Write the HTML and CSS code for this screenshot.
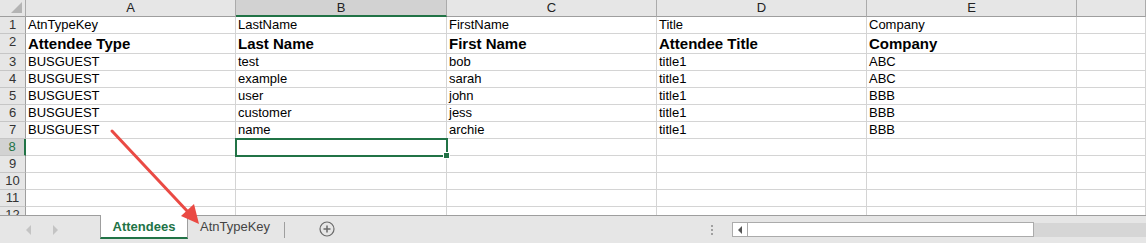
FILE: index.html
```html
<!DOCTYPE html>
<html lang="en">
<head>
    <meta charset="UTF-8">
    <title>Attendees - Excel</title>
    <link rel="stylesheet" href="styles.css">
</head>
<body>
    <div class="window">
        <!-- Worksheet grid -->
        <div class="sheet">
            <div class="corner"></div>
            <div class="col-head">A</div>
            <div class="col-head selected">B</div>
            <div class="col-head">C</div>
            <div class="col-head">D</div>
            <div class="col-head">E</div>
            <div class="col-head"></div>

            <div class="row-head">1</div>
            <div class="cell">AtnTypeKey</div>
            <div class="cell">LastName</div>
            <div class="cell">FirstName</div>
            <div class="cell">Title</div>
            <div class="cell">Company</div>
            <div class="cell"></div>

            <div class="row-head">2</div>
            <div class="cell bold">Attendee Type</div>
            <div class="cell bold">Last Name</div>
            <div class="cell bold">First Name</div>
            <div class="cell bold">Attendee Title</div>
            <div class="cell bold">Company</div>
            <div class="cell"></div>

            <div class="row-head">3</div>
            <div class="cell">BUSGUEST</div>
            <div class="cell">test</div>
            <div class="cell">bob</div>
            <div class="cell">title1</div>
            <div class="cell">ABC</div>
            <div class="cell"></div>

            <div class="row-head">4</div>
            <div class="cell">BUSGUEST</div>
            <div class="cell">example</div>
            <div class="cell">sarah</div>
            <div class="cell">title1</div>
            <div class="cell">ABC</div>
            <div class="cell"></div>

            <div class="row-head">5</div>
            <div class="cell">BUSGUEST</div>
            <div class="cell">user</div>
            <div class="cell">john</div>
            <div class="cell">title1</div>
            <div class="cell">BBB</div>
            <div class="cell"></div>

            <div class="row-head">6</div>
            <div class="cell">BUSGUEST</div>
            <div class="cell">customer</div>
            <div class="cell">jess</div>
            <div class="cell">title1</div>
            <div class="cell">BBB</div>
            <div class="cell"></div>

            <div class="row-head">7</div>
            <div class="cell">BUSGUEST</div>
            <div class="cell">name</div>
            <div class="cell">archie</div>
            <div class="cell">title1</div>
            <div class="cell">BBB</div>
            <div class="cell"></div>

            <div class="row-head selected">8</div>
            <div class="cell"></div>
            <div class="cell active"><span class="fill-handle"></span></div>
            <div class="cell"></div>
            <div class="cell"></div>
            <div class="cell"></div>
            <div class="cell"></div>

            <div class="row-head">9</div>
            <div class="cell"></div><div class="cell"></div><div class="cell"></div>
            <div class="cell"></div><div class="cell"></div><div class="cell"></div>

            <div class="row-head">10</div>
            <div class="cell"></div><div class="cell"></div><div class="cell"></div>
            <div class="cell"></div><div class="cell"></div><div class="cell"></div>

            <div class="row-head">11</div>
            <div class="cell"></div><div class="cell"></div><div class="cell"></div>
            <div class="cell"></div><div class="cell"></div><div class="cell"></div>

            <div class="row-head">12</div>
            <div class="cell"></div><div class="cell"></div><div class="cell"></div>
            <div class="cell"></div><div class="cell"></div><div class="cell"></div>
        </div>

        <!-- Sheet tabs and horizontal scroll -->
        <div class="tab-bar">
            <div class="nav">
                <span class="nav-left"></span>
                <span class="nav-right"></span>
            </div>
            <div class="tab current">Attendees</div>
            <div class="tab">AtnTypeKey</div>
            <div class="tab-sep"></div>
            <div class="add-sheet">
                <svg width="16" height="16" viewBox="0 0 16 16">
                    <circle cx="8" cy="8" r="7" fill="none" stroke="#6a6a6a" stroke-width="1.2"/>
                    <path d="M8 4.5v7M4.5 8h7" stroke="#6a6a6a" stroke-width="1.5"/>
                </svg>
            </div>
            <div class="spacer"></div>
            <div class="grip"><span></span><span></span><span></span></div>
            <div class="hscroll">
                <div class="scroll-btn"><span class="scroll-arrow"></span></div>
            </div>
            <div class="scroll-trough"></div>
        </div>

        <!-- Annotation arrow -->
        <svg class="callout" width="1146" height="243" viewBox="0 0 1146 243">
            <line x1="112" y1="131" x2="189" y2="213" stroke="#ea4a44" stroke-width="3" stroke-linecap="round"/>
            <polygon points="199,224 181,216 194,204" fill="#ea4a44"/>
        </svg>
    </div>
</body>
</html>
```

FILE: styles.css
```css
/* Spreadsheet window */
body {
    margin: 0;
    background-color: #ffffff;
    font-family: "Liberation Sans", Arial, sans-serif;
    color: #000000;
}

.window {
    width: 1146px;
    height: 243px;
    position: relative;
    overflow: hidden;
    display: flex;
    flex-direction: column;
}

.sheet {
    height: 215px;
    overflow: hidden;
    display: grid;
    grid-template-columns: 26px 210px 211px 210px 210px 210px 69px;
    grid-template-rows: 17px 17px 20px repeat(10, 17px);
    font-size: 13px;
}

.sheet > div {
    box-sizing: border-box;
    border-right: 1px solid #d4d4d4;
    border-bottom: 1px solid #d4d4d4;
    white-space: nowrap;
    overflow: hidden;
}

.corner {
    background-color: #e6e6e6;
    position: relative;
}

.sheet > .corner {
    border-right: 1px solid #ababab;
    border-bottom: 1px solid #9e9e9e;
}

.corner::after {
    content: "";
    position: absolute;
    right: 3px;
    bottom: 3px;
    border-left: 11px solid transparent;
    border-bottom: 11px solid #b4b4b4;
}

.sheet > .col-head {
    background-color: #e6e6e6;
    color: #222222;
    text-align: center;
    line-height: 16px;
    border-right: 1px solid #ababab;
    border-bottom: 1px solid #9e9e9e;
}

.sheet > .col-head.selected {
    background-color: #d2d2d2;
    border-bottom: 2px solid #217346;
}

.sheet > .row-head {
    background-color: #e6e6e6;
    color: #333333;
    text-align: center;
    line-height: 16px;
    border-right: 1px solid #9e9e9e;
    border-bottom: 1px solid #c6c6c6;
}

.sheet > .row-head.selected {
    background-color: #d2d2d2;
    color: #217346;
    border-right: 2px solid #217346;
}

.cell {
    padding: 0 3px 0 2px;
    line-height: 16px;
}

.cell.bold {
    font-weight: bold;
    font-size: 15px;
    line-height: 19px;
}

.sheet > .cell.active {
    overflow: visible;
    position: relative;
    outline: 2px solid #217346;
    outline-offset: -1px;
    z-index: 1;
}

.fill-handle {
    position: absolute;
    right: -4px;
    bottom: -4px;
    width: 5px;
    height: 5px;
    background-color: #217346;
    border: 1px solid #ffffff;
}

/* Bottom bar with sheet tabs */
.tab-bar {
    flex: 1;
    display: flex;
    align-items: stretch;
    background-color: #e6e6e6;
    border-top: 1px solid #9e9e9e;
    font-size: 13px;
}

.nav {
    width: 100px;
    display: flex;
    align-items: center;
    gap: 22px;
    padding-left: 26px;
    box-sizing: border-box;
}

.nav-left {
    border-right: 5px solid #c4c4c4;
    border-top: 5px solid transparent;
    border-bottom: 5px solid transparent;
}

.nav-right {
    border-left: 5px solid #c4c4c4;
    border-top: 5px solid transparent;
    border-bottom: 5px solid transparent;
}

.tab {
    height: 22px;
    padding: 0 14px 0 12px;
    line-height: 22px;
    color: #444444;
}

.tab.current {
    width: 88px;
    box-sizing: border-box;
    text-align: center;
    padding: 0;
    margin-top: -1px;
    height: 24px;
    line-height: 24px;
    background-color: #ffffff;
    border-left: 1px solid #9e9e9e;
    border-right: 1px solid #9e9e9e;
    border-bottom: 2px solid #217346;
    color: #217346;
    font-weight: bold;
}

.tab-sep {
    width: 1px;
    background-color: #9e9e9e;
    margin: 6px 0 5px 0;
}

.add-sheet {
    padding-left: 34px;
    display: flex;
    align-items: center;
    padding-bottom: 1px;
}

.spacer {
    flex: 1;
}

.grip {
    display: flex;
    flex-direction: column;
    justify-content: center;
    gap: 2px;
    margin-right: 19px;
}

.grip span {
    width: 2px;
    height: 2px;
    background-color: #a0a0a0;
}

.hscroll {
    width: 302px;
    height: 15px;
    margin-top: 6px;
    box-sizing: border-box;
    background-color: #ffffff;
    border: 1px solid #ababab;
}

.scroll-btn {
    width: 14px;
    height: 13px;
    border-right: 1px solid #ababab;
    display: flex;
    align-items: center;
    justify-content: center;
    background-color: #ffffff;
}

.scroll-arrow {
    border-right: 4px solid #555555;
    border-top: 4px solid transparent;
    border-bottom: 4px solid transparent;
}

.scroll-trough {
    width: 112px;
    height: 14px;
    margin-top: 7px;
    background-color: #d6d6d6;
}

/* Red arrow drawn over the sheet */
.callout {
    position: absolute;
    left: 0;
    top: 0;
    pointer-events: none;
}
```
